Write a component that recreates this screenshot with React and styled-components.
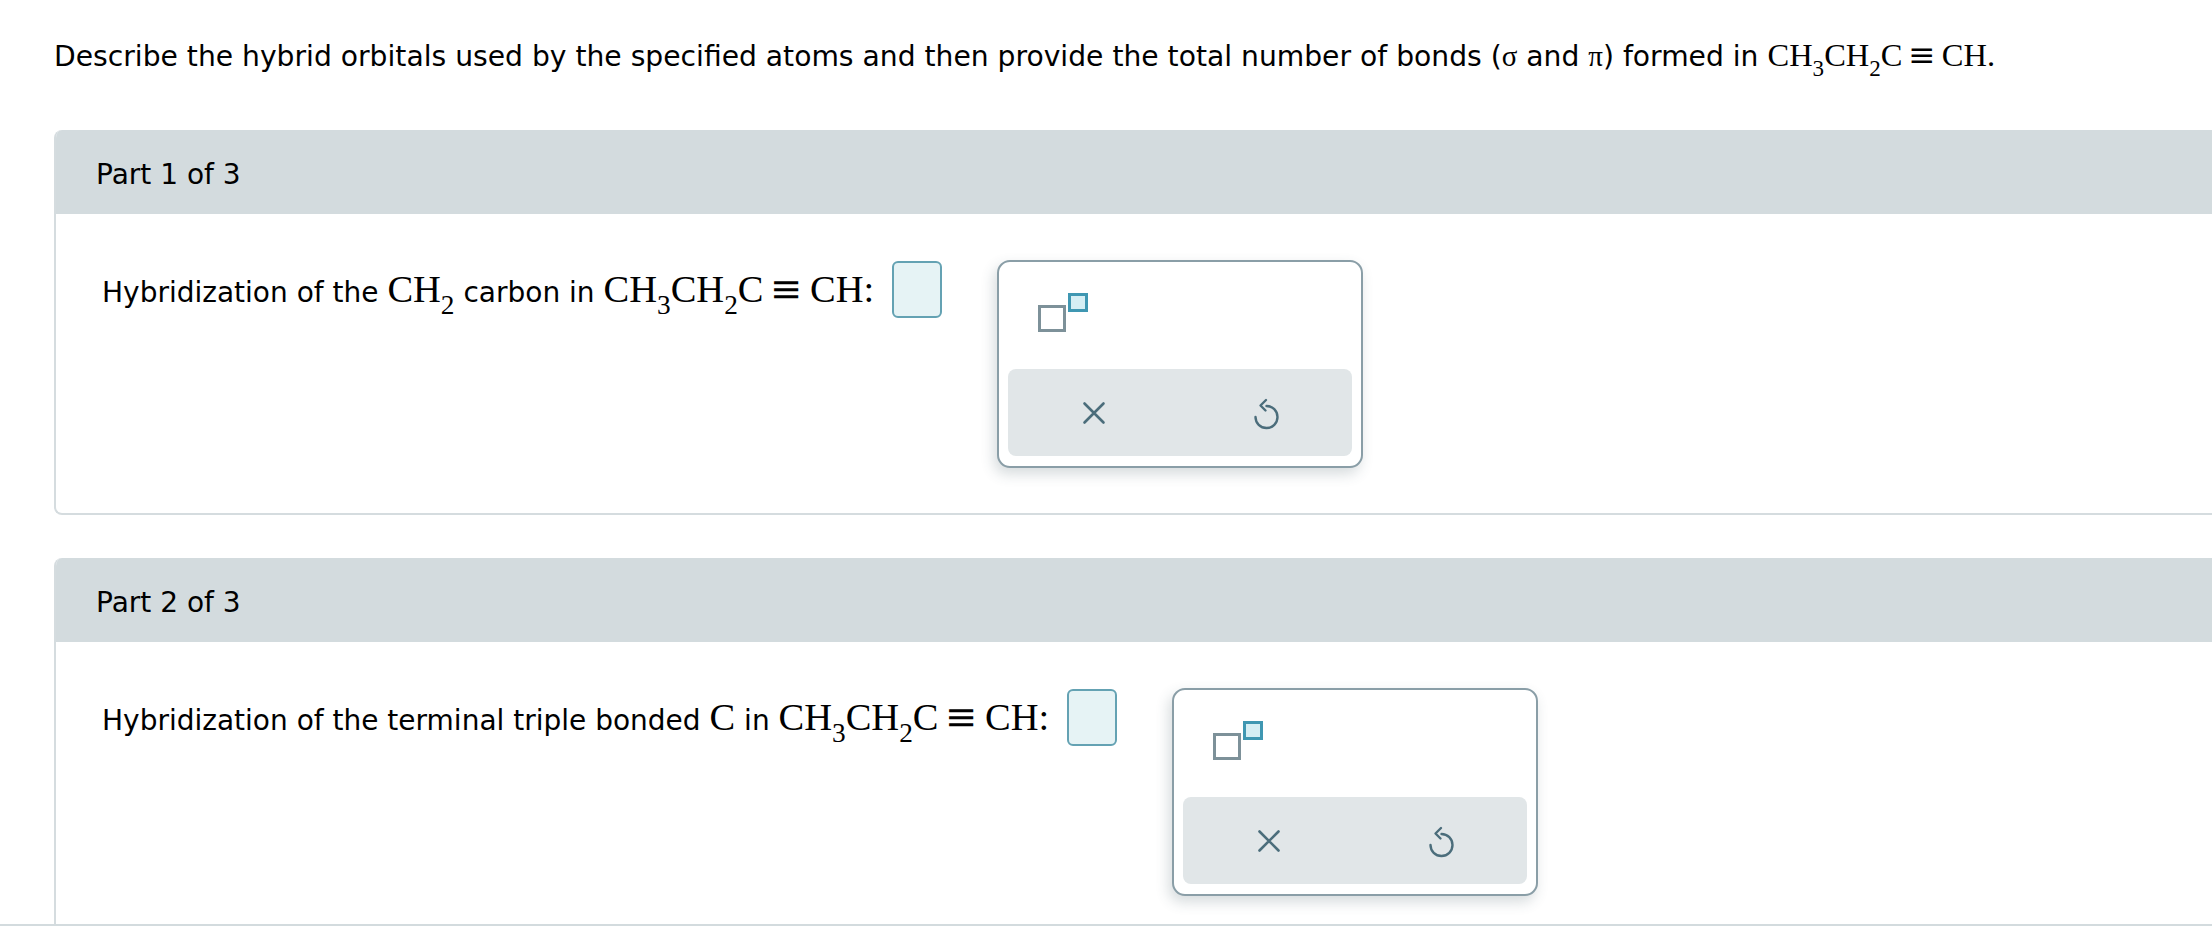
import React from 'react';
import styled, { createGlobalStyle } from 'styled-components';

const GlobalStyle = createGlobalStyle`
  html, body {
    margin: 0;
    padding: 0;
    background: #ffffff;
  }
  body {
    font-family: "DejaVu Sans", Verdana, sans-serif;
    color: #000;
    overflow: hidden;
  }
`;

const Page = styled.div`
  height: 928px;
  display: flex;
  flex-direction: column;
  overflow: hidden;
`;

const Main = styled.main`
  flex: 1;
  min-height: 0;
  overflow: hidden;
  padding: 36px 0 0 54px;
`;

const Footer = styled.footer`
  flex: none;
  height: 2px;
  border-top: 2px solid #d3dbde;
`;

const Title = styled.p`
  margin: 0 0 53px;
  font-size: 28.2px;
  line-height: 40px;
  white-space: nowrap;
`;

const Greek = styled.span`
  font-family: "Liberation Serif", "DejaVu Serif", serif;
  font-size: 29px;
`;

const MathText = styled.span`
  font-family: "Liberation Serif", "DejaVu Serif", serif;
  font-size: ${(p) => p.$size || 33}px;
  line-height: 0;
`;

const Sub = styled.span`
  font-size: 0.71em;
  vertical-align: -0.45em;
  line-height: 0;
`;

const Bond = styled.span`
  font-family: "DejaVu Serif", serif;
  margin: 0 0.2em 0 0.17em;
`;

const Panel = styled.section`
  margin: 0 -60px ${(p) => (p.$last ? 0 : 43)}px 0;
  border-left: 2px solid #d5dcdf;
  border-bottom: 2px solid #d5dcdf;
  border-radius: 8px 0 0 8px;
  overflow: hidden;
`;

const PanelHeader = styled.header`
  box-sizing: border-box;
  height: 84px;
  display: flex;
  align-items: center;
  padding: 5px 0 0 40px;
  background: #d3dbde;
  font-size: 28px;
`;

const PanelBody = styled.div`
  padding: 46px 0 45px 46px;
  display: flex;
  align-items: flex-start;
`;

const Question = styled.div`
  display: flex;
  align-items: center;
  margin-top: 1px;
  height: 57px;
`;

const QuestionText = styled.span`
  font-size: 28px;
  line-height: 40px;
  white-space: nowrap;
  padding-top: 7px;
`;

const AnswerBox = styled.div`
  box-sizing: border-box;
  width: 50px;
  height: 57px;
  margin-left: 18px;
  border: 2px solid #64a2b3;
  border-radius: 6px;
  background: #e6f3f5;
`;

const Popup = styled.div`
  box-sizing: border-box;
  width: 366px;
  height: 208px;
  margin-left: 55px;
  border: 2px solid #8a9ea7;
  border-radius: 13px;
  background: #fff;
  box-shadow: -3px 6px 14px rgba(50, 75, 85, 0.2);
  display: flex;
  flex-direction: column;
  padding: 0 9px 10px;
`;

const IconArea = styled.div`
  flex: 1;
  padding: 31px 0 0 30px;
`;

const ToolBar = styled.div`
  height: 87px;
  background: #e1e6e8;
  border-radius: 8px;
  display: grid;
  grid-template-columns: 1fr 1fr;
  align-items: center;
  justify-items: center;
`;

const ToolButton = styled.button`
  border: 0;
  background: transparent;
  padding: 0;
  display: flex;
  align-items: center;
  justify-content: center;
  color: #4b6d7b;
  cursor: pointer;
`;

function SuperscriptIcon() {
  return (
    <svg width="50" height="40" viewBox="0 0 50 40">
      <rect x="1.5" y="13.5" width="25" height="24" fill="#fff" stroke="#7d9199" strokeWidth="3" />
      <rect x="31.5" y="1.5" width="17" height="16" fill="#d5eef4" stroke="#3f97b2" strokeWidth="3" />
    </svg>
  );
}

function ClearIcon() {
  return (
    <svg width="24" height="24" viewBox="0 0 24 24" fill="none" stroke="currentColor" strokeWidth="2.6" strokeLinecap="round">
      <path d="M2.5 2.5 L21.5 21.5 M21.5 2.5 L2.5 21.5" />
    </svg>
  );
}

function UndoIcon() {
  return (
    <svg width="28" height="34" viewBox="0 0 28 34" fill="none" stroke="currentColor" strokeWidth="2.4" strokeLinecap="round" strokeLinejoin="round">
      <path d="M3.5 21 A11 11 0 1 0 14.5 10" />
      <path d="M14 4 L8.5 9.5 L13.5 14.5" />
    </svg>
  );
}

function Formula({ end, size }) {
  return (
    <MathText $size={size}>
      CH<Sub>3</Sub>CH<Sub>2</Sub>C<Bond>≡</Bond>CH{end}
    </MathText>
  );
}

function AnswerPopup() {
  return (
    <Popup>
      <IconArea>
        <SuperscriptIcon />
      </IconArea>
      <ToolBar>
        <ToolButton aria-label="Clear">
          <ClearIcon />
        </ToolButton>
        <ToolButton aria-label="Undo">
          <UndoIcon />
        </ToolButton>
      </ToolBar>
    </Popup>
  );
}

function Part({ label, last, children }) {
  return (
    <Panel $last={last}>
      <PanelHeader>{label}</PanelHeader>
      <PanelBody>
        <Question>
          <QuestionText>{children}</QuestionText>
          <AnswerBox />
        </Question>
        <AnswerPopup />
      </PanelBody>
    </Panel>
  );
}

export default function App() {
  return (
    <>
      <GlobalStyle />
      <Page>
        <Main>
          <Title>
            Describe the hybrid orbitals used by the specified atoms and then provide the total number of bonds (
            <Greek>σ</Greek> and <Greek>π</Greek>) formed in <Formula end="." size={32.5} />
          </Title>
          <Part label="Part 1 of 3">
            Hybridization of the <MathText $size={38.5}>CH<Sub>2</Sub></MathText> carbon in <Formula end=":" size={38.5} />
          </Part>
          <Part label="Part 2 of 3" last>
            Hybridization of the terminal triple bonded <MathText $size={38.5}>C</MathText> in <Formula end=":" size={38.5} />
          </Part>
        </Main>
        <Footer />
      </Page>
    </>
  );
}
